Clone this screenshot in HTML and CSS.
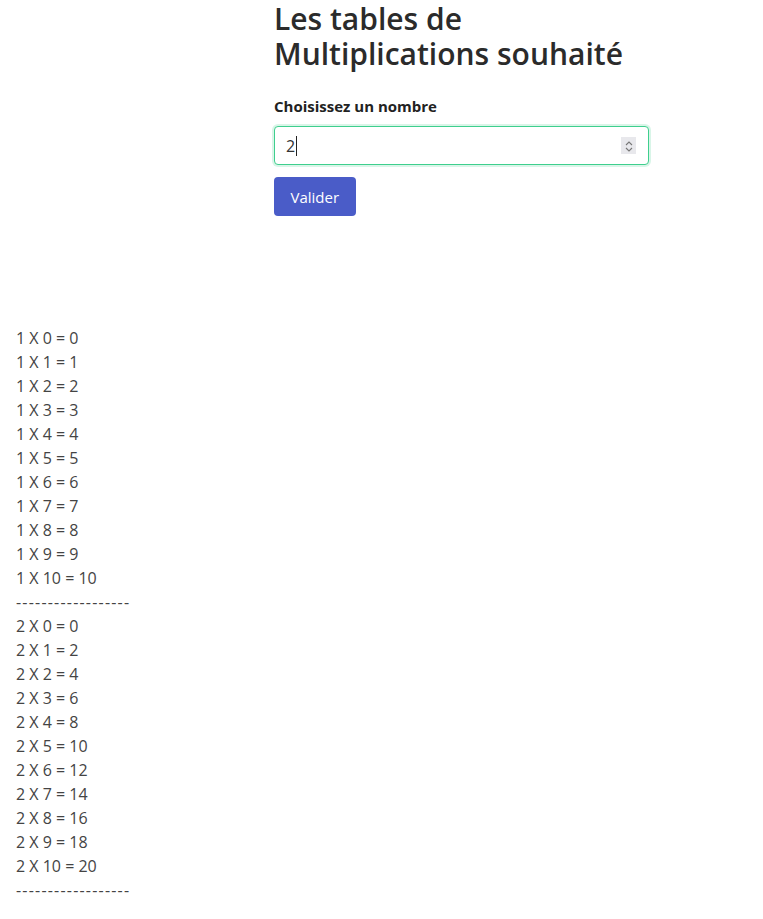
FILE: index.html
```html
<!DOCTYPE html>
<html lang="fr">
<head>
<meta charset="utf-8">
<title>Tables de multiplication</title>
<link rel="stylesheet" href="styles.css">
</head>
<body>
<main class="form-area">
  <h2 class="title">Les tables de Multiplications souhaité</h2>
  <form class="form">
    <label class="label" for="n">Choisissez un nombre</label>
    <div class="input-wrap">
      <input class="input" id="n" type="text" value="2">
      <span class="caret"></span>
      <span class="spinner">
        <svg width="12" height="16" viewBox="0 0 12 16"><path d="M3 7 L6 4 L9 7" fill="none" stroke="#777" stroke-width="1.1"/><path d="M3 10 L6 13 L9 10" fill="none" stroke="#777" stroke-width="1.1"/></svg>
      </span>
    </div>
    <button class="btn" type="button">Valider</button>
  </form>
</main>
<section class="results">
  <div>1 X 0 = 0</div>
  <div>1 X 1 = 1</div>
  <div>1 X 2 = 2</div>
  <div>1 X 3 = 3</div>
  <div>1 X 4 = 4</div>
  <div>1 X 5 = 5</div>
  <div>1 X 6 = 6</div>
  <div>1 X 7 = 7</div>
  <div>1 X 8 = 8</div>
  <div>1 X 9 = 9</div>
  <div>1 X 10 = 10</div>
  <div class="sep">------------------</div>
  <div>2 X 0 = 0</div>
  <div>2 X 1 = 2</div>
  <div>2 X 2 = 4</div>
  <div>2 X 3 = 6</div>
  <div>2 X 4 = 8</div>
  <div>2 X 5 = 10</div>
  <div>2 X 6 = 12</div>
  <div>2 X 7 = 14</div>
  <div>2 X 8 = 16</div>
  <div>2 X 9 = 18</div>
  <div>2 X 10 = 20</div>
  <div class="sep">------------------</div>
</section>
</body>
</html>
```

FILE: styles.css
```css
html, body {
  margin: 0;
  padding: 0;
  background: #fff;
}
body {
  font-family: "Open Sans", "Noto Sans", sans-serif;
  font-size: 16px;
  line-height: 24px;
  color: #212529;
}
.form-area {
  margin-left: 274px;
  width: 375px;
  padding-top: 1px;
}
.title {
  margin: 0 0 23px 0;
  font-size: 30px;
  line-height: 35px;
  font-weight: 600;
  color: #2b2b2b;
}
.form {
  display: flex;
  flex-direction: column;
  align-items: flex-start;
}
.label {
  font-weight: 700;
  font-size: 15px;
  line-height: 24px;
  margin-bottom: 8px;
  color: #222;
}
.input-wrap {
  position: relative;
  width: 375px;
  margin-bottom: 12px;
}
.input {
  box-sizing: border-box;
  width: 100%;
  height: 39px;
  padding: 6px 11px;
  font-family: inherit;
  font-size: 16px;
  color: #333;
  border: 1px solid #3fcf8e;
  border-radius: 4px;
  box-shadow: 0 0 0 2px rgba(63, 207, 142, 0.2);
  outline: none;
  background: #fff;
}
.caret {
  position: absolute;
  left: 22px;
  top: 10px;
  width: 1px;
  height: 20px;
  background: #222;
}
.spinner {
  position: absolute;
  right: 13px;
  top: 11px;
  width: 15px;
  height: 17px;
  background: #e8e8ec;
  display: flex;
  align-items: center;
  justify-content: center;
}
.btn {
  font-family: inherit;
  font-size: 15px;
  line-height: 24px;
  color: #fff;
  background: #4a5cc8;
  border: none;
  border-radius: 4px;
  padding: 7.5px 16.5px;
  cursor: pointer;
}
.results {
  margin-top: 110px;
  padding-left: 16px;
  color: #444;
}
.sep {
  letter-spacing: 1.2px;
}
```
